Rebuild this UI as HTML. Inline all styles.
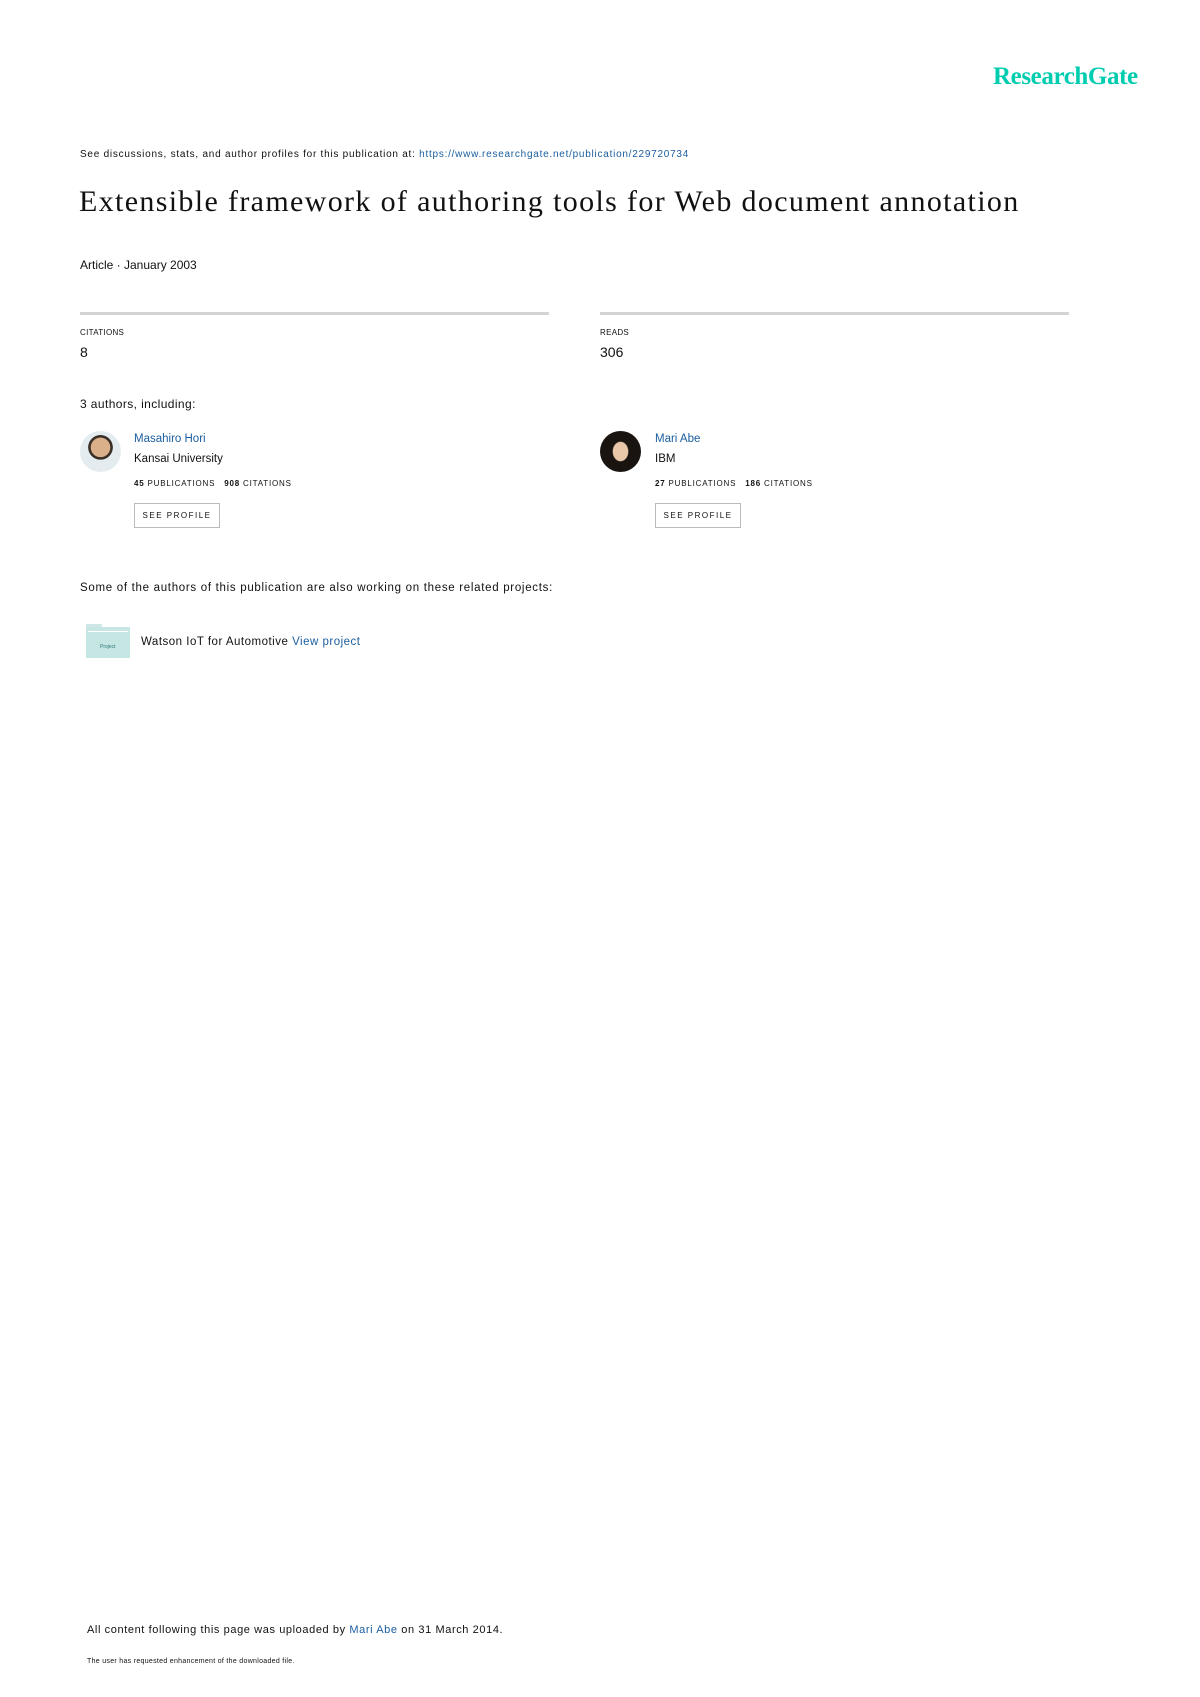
<!DOCTYPE html>
<html><head><meta charset="utf-8"><style>
body{margin:0;background:#fff;width:1200px;height:1697px;position:relative;font-family:"Liberation Sans",sans-serif;color:#111;}
.a{position:absolute;white-space:nowrap;}
.blue{color:#1a5d9e;}
.line{position:absolute;height:3px;background:#d3d3d3;}
.sm{font-size:8px;letter-spacing:0.3px;}
.av{position:absolute;width:41px;height:41px;border-radius:50%;overflow:hidden;}
.btn{position:absolute;width:86px;height:25px;border:1px solid #bbb;box-sizing:border-box;font-size:8px;letter-spacing:1.5px;text-align:center;line-height:23px;}
</style></head><body>
<div class="a" style="left:993px;top:63px;font-family:'Liberation Serif',serif;font-size:25px;font-weight:bold;color:#00ccb0;letter-spacing:-0.4px;">ResearchGate</div>
<div class="a" style="left:80px;top:149px;font-size:10px;letter-spacing:0.75px;">See discussions, stats, and author profiles for this publication at: <span class="blue">https://www.researchgate.net/publication/229720734</span></div>
<div class="a" style="left:79px;top:185px;font-family:'Liberation Serif',serif;font-size:30px;letter-spacing:1.35px;">Extensible framework of authoring tools for Web document annotation</div>
<div class="a" style="left:80px;top:258px;font-size:12px;">Article · January 2003</div>
<div class="line" style="left:80px;top:312px;width:469px;"></div>
<div class="line" style="left:600px;top:312px;width:469px;"></div>
<div class="a sm" style="left:80px;top:328px;">CITATIONS</div>
<div class="a" style="left:80px;top:344px;font-size:14px;">8</div>
<div class="a sm" style="left:600px;top:328px;">READS</div>
<div class="a" style="left:600px;top:344px;font-size:14px;">306</div>
<div class="a" style="left:80px;top:397px;font-size:12px;letter-spacing:0.4px;">3 authors, including:</div>

<div class="av" style="left:80px;top:431px;background:radial-gradient(circle at 50% 40%,#d9b08a 0 30%,#3a3028 31% 38%,#e4ecf0 39%);"></div>
<div class="a blue" style="left:134px;top:433px;font-size:11.5px;">Masahiro Hori</div>
<div class="a" style="left:134px;top:453px;font-size:11.5px;">Kansai University</div>
<div class="a sm" style="left:134px;top:479px;letter-spacing:0.8px;"><b>45</b> PUBLICATIONS &nbsp; <b>908</b> CITATIONS</div>
<div class="btn" style="left:134px;top:503px;">SEE PROFILE</div>

<div class="av" style="left:600px;top:431px;background:radial-gradient(ellipse 40% 50% at 50% 50%,#e8c8a8 0 45%,#1a1410 50% 100%),#d0cbc2;"></div>
<div class="a blue" style="left:655px;top:433px;font-size:11.5px;">Mari Abe</div>
<div class="a" style="left:655px;top:453px;font-size:11.5px;">IBM</div>
<div class="a sm" style="left:655px;top:479px;letter-spacing:0.8px;"><b>27</b> PUBLICATIONS &nbsp; <b>186</b> CITATIONS</div>
<div class="btn" style="left:655px;top:503px;">SEE PROFILE</div>

<div class="a" style="left:80px;top:582px;font-size:11.5px;letter-spacing:0.7px;">Some of the authors of this publication are also working on these related projects:</div>
<div class="a" style="left:86px;top:624px;width:44px;height:34px;">
<div style="position:absolute;left:0;top:0;width:16px;height:4px;background:#cde8e6;"></div>
<div style="position:absolute;left:0;top:3px;width:44px;height:31px;background:#c6e6e3;"></div>
<div style="position:absolute;left:2px;top:7px;width:40px;height:1px;background:#fff;"></div>
<div style="position:absolute;left:14px;top:20px;font-size:5px;color:#2a7a78;">Project</div></div>
<div class="a" style="left:141px;top:636px;font-size:11.5px;letter-spacing:0.5px;">Watson IoT for Automotive <span class="blue">View project</span></div>

<div class="a" style="left:87px;top:1624px;font-size:11px;letter-spacing:0.6px;">All content following this page was uploaded by <span class="blue">Mari Abe</span> on 31 March 2014.</div>
<div class="a" style="left:87px;top:1658px;font-size:7px;letter-spacing:0.3px;">The user has requested enhancement of the downloaded file.</div>
</body></html>
